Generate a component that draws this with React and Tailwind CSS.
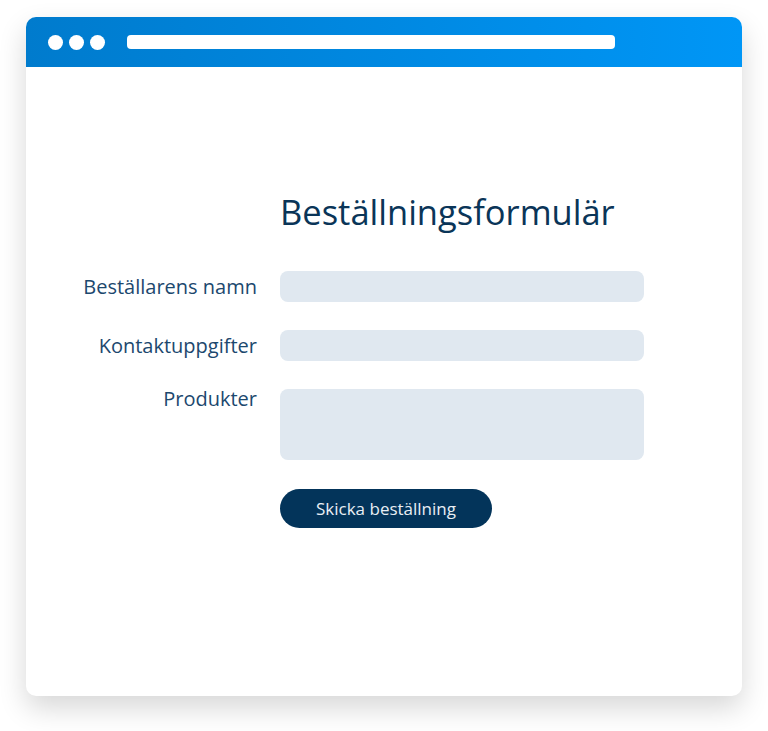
import React from 'react';

const Field = ({ label }) => (
  <div className="flex items-center gap-[23px]">
    <label className="w-[231px] text-right text-[20px] text-[#1c486e]">{label}</label>
    <div className="w-[364px] h-[31px] rounded-[8px] bg-[#e0e8f0]" />
  </div>
);

export default function App() {
  return (
    <div className="w-[768px] h-[731px] bg-white pt-[17px] pl-[26px]" style={{ fontFamily: '"Open Sans", "Noto Sans", sans-serif' }}>
      <div className="w-[716px] h-[679px] rounded-[10px] bg-white shadow-[0_12px_28px_rgba(0,0,0,0.16)] overflow-hidden flex flex-col">
        <div className="h-[50px] bg-gradient-to-r from-[#007bcd] to-[#0096f6] flex items-center px-[22px]">
          <div className="flex gap-[6px]">
            <span className="w-[15px] h-[15px] rounded-full bg-white" />
            <span className="w-[15px] h-[15px] rounded-full bg-white" />
            <span className="w-[15px] h-[15px] rounded-full bg-white" />
          </div>
          <div className="ml-[22px] w-[488px] h-[14px] rounded-[4px] bg-white" />
        </div>

        <div className="flex flex-col pt-[121px]">
          <h1 className="ml-[254px] text-[34.5px] leading-[48px] text-[#0a3558]">Beställningsformulär</h1>
          <div className="mt-[35px] flex flex-col gap-[28px]">
            <Field label="Beställarens namn" />
            <Field label="Kontaktuppgifter" />
            <div className="flex items-start gap-[23px]">
              <label className="w-[231px] text-right text-[20px] leading-[20px] text-[#1c486e]">Produkter</label>
              <div className="w-[364px] h-[71px] rounded-[8px] bg-[#e0e8f0]" />
            </div>
          </div>
          <button className="ml-[254px] mt-[29px] w-[212px] h-[39px] rounded-full bg-[#03345a] text-[#e9eef4] text-[17px]">
            Skicka beställning
          </button>
        </div>
      </div>
    </div>
  );
}
